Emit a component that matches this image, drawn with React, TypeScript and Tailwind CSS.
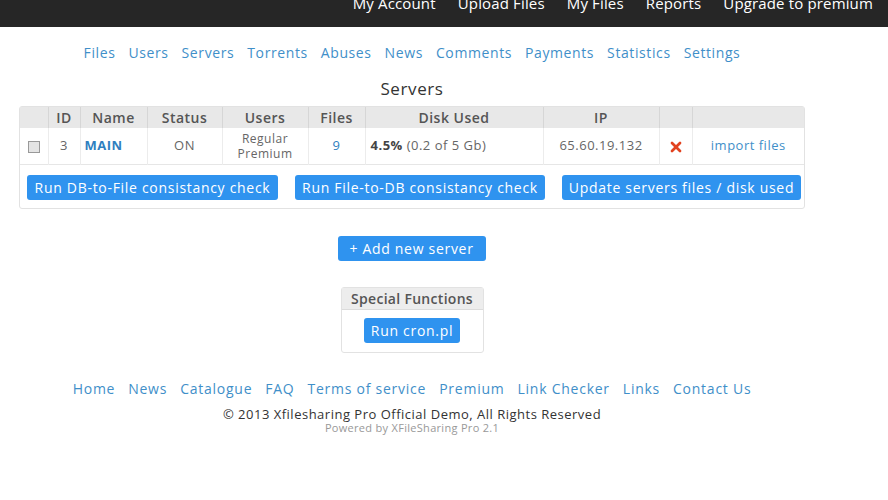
import { X } from 'lucide-react'

const topLinks = ['My Account', 'Upload Files', 'My Files', 'Reports', 'Upgrade to premium']
const adminLinks = ['Files', 'Users', 'Servers', 'Torrents', 'Abuses', 'News', 'Comments', 'Payments', 'Statistics', 'Settings']
const footerLinks = ['Home', 'News', 'Catalogue', 'FAQ', 'Terms of service', 'Premium', 'Link Checker', 'Links', 'Contact Us']

const font = { fontFamily: '"Open Sans", "Liberation Sans", sans-serif' }

function Btn({ children, className = '' }: { children: React.ReactNode; className?: string }) {
  return (
    <button className={`h-[25px] px-1 bg-[#2f93ef] text-white text-[14px] leading-[25px] tracking-[0.7px] rounded-[3px] whitespace-nowrap ${className}`}>
      {children}
    </button>
  )
}

export default function App() {
  return (
    <div className="w-[888px] h-[500px] bg-white text-[#444] overflow-hidden" style={font}>
      {/* Top bar */}
      <div className="h-[27px] bg-[#262626] overflow-hidden flex justify-end pr-[15px]">
        <div className="flex gap-[22px] -mt-[7px] text-white text-[15px] leading-5 tracking-[0.15px]">
          {topLinks.map(l => <span key={l}>{l}</span>)}
        </div>
      </div>

      <div className="w-[824px]">
        {/* Admin nav */}
        <div className="flex justify-center gap-[13px] mt-[16px] text-[14px] leading-5 tracking-[0.6px] text-[#3f8fc9]">
          {adminLinks.map(l => <span key={l}>{l}</span>)}
        </div>

        <h2 className="text-center text-[17px] leading-6 tracking-[0.6px] text-[#333] mt-[14px]">Servers</h2>

        {/* Servers table */}
        <div className="mx-[19px] mt-[5px] border border-[#e2e2e2] rounded-[3px]">
          <table className="w-full border-collapse text-[13px] tracking-[0.5px]">
            <thead>
              <tr className="h-[21px] bg-[#e8e8e8] text-[14px] text-[#555]">
                <th className="w-[28px] border-r border-[#d6d6d6]"></th>
                <th className="w-[32px] border-r border-[#d6d6d6] font-semibold">ID</th>
                <th className="w-[67px] border-r border-[#d6d6d6] font-semibold">Name</th>
                <th className="w-[75px] border-r border-[#d6d6d6] font-semibold">Status</th>
                <th className="w-[86px] border-r border-[#d6d6d6] font-semibold">Users</th>
                <th className="w-[57px] border-r border-[#d6d6d6] font-semibold">Files</th>
                <th className="w-[178px] border-r border-[#d6d6d6] font-semibold">Disk Used</th>
                <th className="w-[116px] border-r border-[#d6d6d6] font-semibold">IP</th>
                <th className="w-[33px] border-r border-[#d6d6d6]"></th>
                <th></th>
              </tr>
            </thead>
            <tbody>
              <tr className="h-[36px] border-b border-[#e6e6e6] text-[#666]">
                <td className="border-r border-[#ececec] text-center">
                  <span className="inline-block w-[12px] h-[12px] border border-[#999] bg-[#e4e4e4] align-middle" />
                </td>
                <td className="border-r border-[#ececec] text-center">3</td>
                <td className="border-r border-[#ececec] pl-[4px] font-bold text-[#2f7fc0]">MAIN</td>
                <td className="border-r border-[#ececec] text-center">ON</td>
                <td className="border-r border-[#ececec] text-center text-[12px] leading-[15px]">Regular<br />Premium</td>
                <td className="border-r border-[#ececec] text-center text-[#2f7fc0]">9</td>
                <td className="border-r border-[#ececec] pl-[5px]"><b className="text-[#444]">4.5%</b> (0.2 of 5 Gb)</td>
                <td className="border-r border-[#ececec] text-center">65.60.19.132</td>
                <td className="border-r border-[#ececec] text-center">
                  <X size={16} strokeWidth={4} className="inline text-[#e2421f]" />
                </td>
                <td className="text-center text-[#3f8fc9]">import files</td>
              </tr>
            </tbody>
          </table>
          <div className="flex justify-between pl-[7px] pr-[3px] pt-[10px] pb-[8px]">
            <Btn className="w-[251px]">Run DB-to-File consistancy check</Btn>
            <Btn className="w-[250px]">Run File-to-DB consistancy check</Btn>
            <Btn className="w-[239px]">Update servers files / disk used</Btn>
          </div>
        </div>

        <div className="flex justify-center mt-[27px]">
          <Btn className="w-[148px] ml-[-1px]">+ Add new server</Btn>
        </div>

        {/* Special functions */}
        <div className="flex justify-center mt-[26px]">
          <div className="w-[143px] border border-[#e2e2e2] rounded-[3px]">
            <div className="h-[22px] bg-[#ededed] text-center text-[14px] leading-[22px] tracking-[0.3px] font-semibold text-[#555] border-b border-[#dcdcdc]">
              Special Functions
            </div>
            <div className="flex justify-center pt-[8px] pb-[9px]">
              <Btn className="w-[96px]">Run cron.pl</Btn>
            </div>
          </div>
        </div>

        {/* Footer */}
        <div className="flex justify-center gap-[13px] mt-[26px] text-[14px] leading-5 tracking-[0.75px] text-[#3f8fc9]">
          {footerLinks.map(l => <span key={l}>{l}</span>)}
        </div>
        <div className="text-center text-[13px] leading-4 tracking-[0.5px] text-[#333] mt-[7px]">© 2013 Xfilesharing Pro Official Demo, All Rights Reserved</div>
        <div className="text-center text-[11px] leading-3 tracking-[0.3px] text-[#999]">Powered by XFileSharing Pro 2.1</div>
      </div>
    </div>
  )
}
